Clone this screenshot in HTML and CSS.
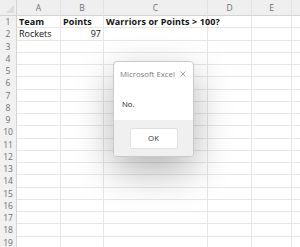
FILE: index.html
```html
<!DOCTYPE html>
<html lang="en">
<head>
    <meta charset="UTF-8">
    <title>Sheet</title>
    <link rel="stylesheet" href="styles.css">
</head>
<body>
    <div class="sheet">
        <div class="corner"><span class="tri"></span></div>
        <div class="col-head">A</div>
        <div class="col-head">B</div>
        <div class="col-head">C</div>
        <div class="col-head">D</div>
        <div class="col-head">E</div>
        <div class="col-head last"></div>

        <div class="row-head">1</div>
        <div class="cell bold">Team</div>
        <div class="cell bold">Points</div>
        <div class="cell bold">Warriors or Points &gt; 100?</div>
        <div class="cell"></div><div class="cell"></div><div class="cell last"></div>

        <div class="row-head">2</div>
        <div class="cell">Rockets</div>
        <div class="cell num">97</div>
        <div class="cell"></div><div class="cell"></div><div class="cell"></div><div class="cell last"></div>
    </div>

    <div class="dialog">
        <div class="dialog-title">
            <span>Microsoft Excel</span>
            <svg class="close" width="6" height="6" viewBox="0 0 6 6">
                <path d="M0.5 0.5 L5.5 5.5 M5.5 0.5 L0.5 5.5" stroke="#8a8a8a" stroke-width="0.8" fill="none"/>
            </svg>
        </div>
        <div class="dialog-body">No.</div>
        <div class="dialog-foot">
            <button class="ok-btn">OK</button>
        </div>
    </div>

    <script>
        // fill remaining empty rows 3..19
        const sheet = document.querySelector('.sheet');
        for (let r = 3; r <= 19; r++) {
            let html = '<div class="row-head">' + r + '</div>';
            for (let c = 0; c < 6; c++) {
                html += '<div class="cell' + (c === 5 ? ' last' : '') + '"></div>';
            }
            sheet.insertAdjacentHTML('beforeend', html);
        }
    </script>
</body>
</html>
```

FILE: styles.css
```css
body {
    margin: 0;
    background: #ffffff;
    font-family: "Open Sans", "Noto Sans", Arial, sans-serif;
    overflow: hidden;
    position: relative;
    width: 300px;
    height: 247px;
}

.sheet {
    display: grid;
    grid-template-columns: 17px 44px 43px 104px 44px 40px 20px;
    grid-template-rows: 16px repeat(19, 12.25px);
}

.corner {
    background: #efefef;
    border-bottom: 1px solid #d4d4d4;
    border-right: 1px solid #d4d4d4;
    position: relative;
}

.corner .tri {
    position: absolute;
    right: 2px;
    bottom: 2px;
    width: 0;
    height: 0;
    border-left: 8px solid transparent;
    border-bottom: 8px solid #dcdcdc;
}

.col-head {
    background: #efefef;
    border-bottom: 1px solid #d4d4d4;
    border-right: 1px solid #e2e2e2;
    color: #707070;
    font-size: 8.5px;
    text-align: center;
    line-height: 16px;
    box-sizing: border-box;
}

.row-head {
    background: #f1f1f1;
    border-right: 1px solid #d4d4d4;
    color: #707070;
    font-size: 8.5px;
    text-align: center;
    line-height: 12.5px;
}

.cell {
    border-right: 1px solid #e6e6e6;
    border-bottom: 1px solid #e6e6e6;
    box-sizing: border-box;
    font-size: 9px;
    color: #111;
    line-height: 12px;
    padding-left: 2px;
    white-space: nowrap;
}

.cell.last,
.col-head.last {
    border-right: none;
}

.bold {
    font-weight: bold;
    letter-spacing: 0.1px;
}

.num {
    text-align: right;
    padding-right: 2px;
}

.dialog {
    position: absolute;
    left: 113px;
    top: 61px;
    width: 81px;
    height: 96px;
    background: #fff;
    border: 1px solid #c9c9c9;
    border-radius: 4px;
    box-shadow: 0 14px 38px rgba(0, 0, 0, 0.3);
    display: flex;
    flex-direction: column;
    overflow: hidden;
    box-sizing: border-box;
}

.dialog-title {
    display: flex;
    justify-content: space-between;
    align-items: center;
    padding: 4px 7px 0 6px;
    height: 16px;
    font-size: 7.8px;
    color: #7a7a7a;
}

.dialog-body {
    flex: 1;
    font-size: 7.8px;
    color: #222;
    padding: 17px 0 0 8px;
}

.dialog-foot {
    background: #f0f0f0;
    height: 36px;
    display: flex;
    justify-content: center;
    align-items: center;
}

.ok-btn {
    width: 48px;
    height: 21px;
    background: #fff;
    border: 1px solid #e0e0e0;
    border-radius: 2px;
    font-family: inherit;
    font-size: 7.8px;
    color: #333;
    padding: 0;
}
```
